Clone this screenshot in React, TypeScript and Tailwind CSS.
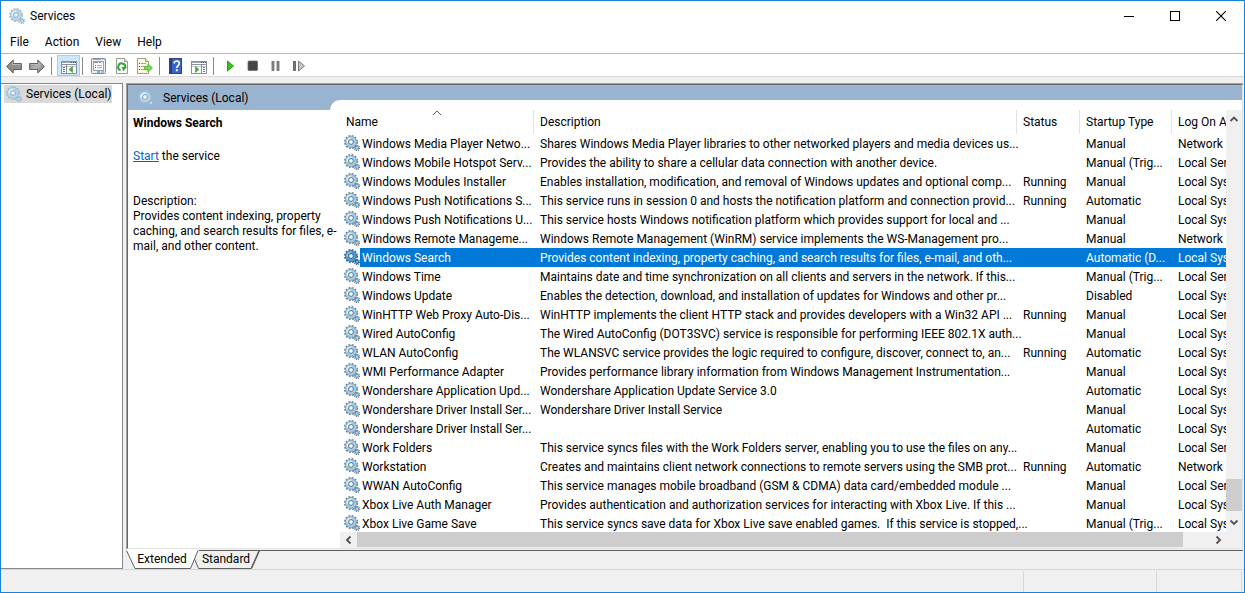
import type { ReactNode } from "react";

type GearTone = "normal" | "pale" | "selected";

const gearTones = {
  normal: { teeth: "#5f819b", body: "#a5cae2", rim: "#7299b4", hub: "#4d7089", shine: "#dceef8", hole: "#ffffff" },
  pale: { teeth: "#9bbace", body: "#b9d6e8", rim: "#95b9cf", hub: "#7fa5bf", shine: "#e3f1f9", hole: "#f4f8fb" },
  selected: { teeth: "#2f6795", body: "#4f9ad0", rim: "#2b6ea6", hub: "#1d4f7c", shine: "#8cc3ea", hole: "#ffffff" },
};

function GearIcon({ tone = "normal" }: { tone?: GearTone }) {
  const c = gearTones[tone];
  return (
    <svg width="16" height="16" viewBox="0 0 16 16" className="block shrink-0" aria-hidden="true">
      <circle cx="7" cy="7" r="6.1" fill="none" stroke={c.teeth} strokeWidth="1.8" strokeDasharray="1.8 1.39" />
      <circle cx="7" cy="7" r="4.2" fill="none" stroke={c.body} strokeWidth="3.2" />
      <circle cx="7" cy="7" r="5.5" fill="none" stroke={c.rim} strokeWidth="0.6" />
      <path d="M3.2 7.6A3.9 3.9 0 0 1 7.4 3.2" fill="none" stroke={c.shine} strokeWidth="1.6" />
      <circle cx="7" cy="7" r="2.4" fill={c.hole} stroke={c.hub} strokeWidth="1" />
      <circle cx="13" cy="12.9" r="2.6" fill="none" stroke={c.teeth} strokeWidth="1.2" strokeDasharray="1.1 0.94" />
      <circle cx="13" cy="12.9" r="1.6" fill={c.shine} stroke={c.rim} strokeWidth="1.1" />
      <circle cx="13" cy="12.9" r="0.5" fill={c.hub} />
    </svg>
  );
}

function ArrowIcon({ flip = false }: { flip?: boolean }) {
  return (
    <svg width="16" height="16" viewBox="0 0 16 16" aria-hidden="true">
      <defs>
        <linearGradient id={flip ? "arrowR" : "arrowL"} x1="0" y1="0" x2={flip ? "1" : "-1"} y2="1">
          <stop offset="0" stopColor="#777777" />
          <stop offset="0.5" stopColor="#b4b4b4" />
          <stop offset="1" stopColor="#6a6a6a" />
        </linearGradient>
      </defs>
      <path
        d={flip ? "M15.4 8.5L8.8 2V5.5H.6V11.5H8.8V15Z" : "M.6 8.5L7.2 2V5.5H15.4V11.5H7.2V15Z"}
        fill={flip ? "url(#arrowR)" : "#8f8f8f"}
        stroke="#606060"
        strokeLinejoin="round"
      />
      <path d={flip ? "M1.500 6.500H9.500V4.500" : "M14.500 6.500H6.500V4.500"} fill="none" stroke="#b9b9b9" />
    </svg>
  );
}

function TreePaneIcon({ right = false }: { right?: boolean }) {
  return (
    <svg width="16" height="16" viewBox="0 0 16 16" aria-hidden="true">
      <rect x="0.5" y="3.5" width="15" height="12" fill="#ffffff" stroke="#8a9099" />
      <rect x="1" y="4" width="14" height="1" fill="#a4abb5" />
      <path d="M10 4.500h1M12 4.500h1M14 4.500h1" stroke="#4d5560" />
      <rect x="1" y="6" width="14" height="1" fill="#8a9099" />
      <rect x="1" y="8" width="14" height="1" fill="#c3c8ce" />
      {right ? (
        <>
          <rect x="10" y="7" width="1" height="8" fill="#8a9099" />
          <path d="M12 9.500h2M12 11.500h2M12 13.500h2" stroke="#3f7fc4" />
          <path d="M4.500 8.500v6L8 11.500Z" fill="#43b02a" stroke="#2d8a1d" strokeWidth="0.5" />
        </>
      ) : (
        <>
          <rect x="5" y="7" width="1" height="8" fill="#8a9099" />
          <path d="M2 9.500h2M2 11.500h2M2 13.500h2" stroke="#3f7fc4" />
          <path d="M11.500 8.500v6L8 11.500Z" fill="#43b02a" stroke="#2d8a1d" strokeWidth="0.5" />
        </>
      )}
    </svg>
  );
}

function PropertiesIcon() {
  return (
    <svg width="16" height="16" viewBox="0 0 16 16" aria-hidden="true">
      <rect x="0.5" y="0.5" width="14" height="15" rx="0.8" fill="#eef0f2" stroke="#878d96" />
      <path d="M2 1.500h8M11 1.500h1M13 1.500h1" stroke="#a2a8b1" />
      <rect x="2.5" y="3.5" width="10" height="9" fill="#ffffff" stroke="#9aa1ab" />
      <path d="M3 4.500h4M8 4.500h2" stroke="#7f93ad" />
      <path d="M4 7.500h1M4 9.500h1" stroke="#2f6fd0" />
      <path d="M6 7.500h5M6 9.500h5" stroke="#9bb0ca" />
      <rect x="6" y="13" width="3" height="2" fill="#43c4e8" />
      <rect x="10" y="13" width="3" height="2" fill="#b7bcc4" />
    </svg>
  );
}

function RefreshIcon() {
  return (
    <svg width="16" height="16" viewBox="0 0 16 16" aria-hidden="true">
      <path d="M2.500 .5h8l3 3v12h-11Z" fill="#fafafa" stroke="#9a9a9a" />
      <path d="M10.500 .5v3h3" fill="#e4e4e4" stroke="#9a9a9a" />
      <path d="M6.500 12.300A3.600 3.600 0 1 1 11.400 9.200" fill="none" stroke="#35a832" strokeWidth="2" />
      <path d="M7.600 8.900H13L9.400 13.200Z" fill="#35a832" />
    </svg>
  );
}

function ExportIcon() {
  return (
    <svg width="16" height="16" viewBox="0 0 16 16" aria-hidden="true">
      <path d="M0.500 .5h8l3 3v12h-11Z" fill="#fdf8e2" stroke="#a39c80" />
      <path d="M8.500 .5v3h3" fill="#efe6c0" stroke="#a39c80" />
      <path d="M2 5.500h1M2 8.500h1M2 11.500h1" stroke="#444" />
      <path d="M4 5.500h5M4 8.500h3M4 11.500h4" stroke="#9aa0c0" />
      <path d="M7.500 8.500H11V6L15.500 10L11 14V11.500H7.500Z" fill="#7ed957" stroke="#45ab2c" strokeWidth="0.8" />
    </svg>
  );
}

function HelpIcon() {
  return (
    <svg width="14" height="16" viewBox="0 0 14 16" aria-hidden="true">
      <rect x="0.5" y="0.5" width="12" height="15" fill="#3c64c8" stroke="#27468f" />
      <rect x="1" y="1" width="2" height="14" fill="#24408c" />
      <path d="M5.200 5.600C5.200 3.700 6.300 3 7.600 3s2.700.9 2.700 2.500c0 2-2.500 2.200-2.500 4.500" fill="none" stroke="#fff" strokeWidth="1.700" />
      <rect x="6.900" y="11.300" width="1.900" height="1.900" fill="#fff" />
    </svg>
  );
}

function PlayIcon() {
  return (
    <svg width="16" height="16" viewBox="0 0 16 16" aria-hidden="true">
      <path d="M5.500 3V13L11.500 8Z" fill="#34c41c" stroke="#22a012" strokeLinejoin="round" />
    </svg>
  );
}

function StopIcon() {
  return (
    <svg width="16" height="16" viewBox="0 0 16 16" aria-hidden="true">
      <rect x="3" y="3" width="9.500" height="9.500" rx="1" fill="#454545" stroke="#6a6a6a" strokeWidth="0.8" />
    </svg>
  );
}

function PauseIcon() {
  return (
    <svg width="16" height="16" viewBox="0 0 16 16" aria-hidden="true">
      <rect x="4" y="3.500" width="2" height="9" fill="#8a8a8a" stroke="#666" strokeWidth="0.800" />
      <rect x="9" y="3.500" width="2" height="9" fill="#8a8a8a" stroke="#666" strokeWidth="0.800" />
    </svg>
  );
}

function RestartIcon() {
  return (
    <svg width="16" height="16" viewBox="0 0 16 16" aria-hidden="true">
      <rect x="2.500" y="3.500" width="2" height="9" fill="#777" stroke="#555" strokeWidth="0.800" />
      <path d="M7.500 3V13L13.500 8Z" fill="#c4c4c4" stroke="#7c7c7c" strokeLinejoin="round" />
    </svg>
  );
}

function Chevron({ dir }: { dir: "up" | "down" | "left" | "right" }) {
  const paths = {
    up: "M1.500 7L5 3.500L8.500 7",
    down: "M1.500 3.500L5 7L8.500 3.500",
    left: "M6.500 1.500L3 5L6.500 8.500",
    right: "M3.500 1.500L7 5L3.500 8.500",
  };
  return (
    <svg width="10" height="10" viewBox="0 0 10 10" aria-hidden="true">
      <path d={paths[dir]} fill="none" stroke="#555" strokeWidth="1.900" />
    </svg>
  );
}

function ToolButton({ label, active = false, children }: { label: string; active?: boolean; children: ReactNode }) {
  return (
    <button
      type="button"
      aria-label={label}
      aria-pressed={active || undefined}
      className={
        active
          ? "flex h-[21px] w-[23px] items-center justify-center border border-[#99d1ff] bg-[#cce8ff] pt-px"
          : "flex h-[21px] w-[23px] items-center justify-center pt-px pr-px"
      }
    >
      {children}
    </button>
  );
}

function ToolSeparator() {
  return (
    <div className="h-[21px] w-2 pt-[2px] pl-[2px]">
      <div className="h-[18px] w-px bg-[#8d8d8d]" />
    </div>
  );
}

type Service = [name: string, description: string, status: string, startup: string, logon: string];

const SYS = "Local Sys";
const SER = "Local Ser";
const NET = "Network";

const services: Service[] = [
  ["Windows Media Player Netwo...", "Shares Windows Media Player libraries to other networked players and media devices us...", "", "Manual", NET],
  ["Windows Mobile Hotspot Serv...", "Provides the ability to share a cellular data connection with another device.", "", "Manual (Trig...", SER],
  ["Windows Modules Installer", "Enables installation, modification, and removal of Windows updates and optional comp...", "Running", "Manual", SYS],
  ["Windows Push Notifications S...", "This service runs in session 0 and hosts the notification platform and connection provid...", "Running", "Automatic", SYS],
  ["Windows Push Notifications U...", "This service hosts Windows notification platform which provides support for local and ...", "", "Manual", SYS],
  ["Windows Remote Manageme...", "Windows Remote Management (WinRM) service implements the WS-Management pro...", "", "Manual", NET],
  ["Windows Search", "Provides content indexing, property caching, and search results for files, e-mail, and oth...", "", "Automatic (D...", SYS],
  ["Windows Time", "Maintains date and time synchronization on all clients and servers in the network. If this...", "", "Manual (Trig...", SER],
  ["Windows Update", "Enables the detection, download, and installation of updates for Windows and other pr...", "", "Disabled", SYS],
  ["WinHTTP Web Proxy Auto-Dis...", "WinHTTP implements the client HTTP stack and provides developers with a Win32 API ...", "Running", "Manual", SER],
  ["Wired AutoConfig", "The Wired AutoConfig (DOT3SVC) service is responsible for performing IEEE 802.1X auth...", "", "Manual", SYS],
  ["WLAN AutoConfig", "The WLANSVC service provides the logic required to configure, discover, connect to, an...", "Running", "Automatic", SYS],
  ["WMI Performance Adapter", "Provides performance library information from Windows Management Instrumentation...", "", "Manual", SYS],
  ["Wondershare Application Upd...", "Wondershare Application Update Service 3.0", "", "Automatic", SYS],
  ["Wondershare Driver Install Ser...", "Wondershare Driver Install Service", "", "Manual", SYS],
  ["Wondershare Driver Install Ser...", "", "", "Automatic", SYS],
  ["Work Folders", "This service syncs files with the Work Folders server, enabling you to use the files on any...", "", "Manual", SER],
  ["Workstation", "Creates and maintains client network connections to remote servers using the SMB prot...", "Running", "Automatic", NET],
  ["WWAN AutoConfig", "This service manages mobile broadband (GSM & CDMA) data card/embedded module ...", "", "Manual", SER],
  ["Xbox Live Auth Manager", "Provides authentication and authorization services for interacting with Xbox Live. If this ...", "", "Manual", SYS],
  ["Xbox Live Game Save", "This service syncs save data for Xbox Live save enabled games.\u00a0 If this service is stopped,...", "", "Manual (Trig...", SYS],
];

const SELECTED = "Windows Search";

function ServiceTable() {
  return (
    <table className="w-full table-fixed border-separate border-spacing-0 text-left whitespace-nowrap">
      <colgroup>
        <col className="w-[192px]" />
        <col />
        <col className="w-[63px]" />
        <col className="w-[92px]" />
        <col className="w-[54px]" />
      </colgroup>
      <thead>
        <tr className="h-6">
          <th className="relative border-r border-[#e2e2e2] p-0 pl-1 font-normal">
            Name
            <svg width="10" height="6" viewBox="0 0 10 6" className="absolute top-0 left-[90px]" aria-hidden="true">
              <path d="M1 5L5 1L9 5" fill="none" stroke="#5a5a5a" />
            </svg>
          </th>
          <th className="border-r border-[#e2e2e2] p-0 pl-[6px] font-normal">Description</th>
          <th className="border-r border-[#e2e2e2] p-0 pl-[6px] font-normal">Status</th>
          <th className="border-r border-[#e2e2e2] p-0 pl-[6px] font-normal">Startup Type</th>
          <th className="p-0 pl-[6px] font-normal">Log On A</th>
        </tr>
      </thead>
      <tbody className="leading-[17px]">
        {services.map(([name, description, status, startup, logon], i) => {
          const selected = name === SELECTED;
          return (
            <tr key={i} aria-selected={selected} className={selected ? "bg-[#0078d7] text-white" : ""}>
              <td className="p-0">
                <div className="flex h-[19px]">
                  <span className="w-[18px] shrink-0 bg-white pt-px pl-[2px]">
                    <GearIcon tone={selected ? "selected" : "normal"} />
                  </span>
                  <span className="pt-[2px] pl-[2px]">{name}</span>
                </div>
              </td>
              <td className="p-0 pt-[2px] pl-[6px]">{description}</td>
              <td className="p-0 pt-[2px] pl-[6px]">{status}</td>
              <td className="p-0 pt-[2px] pl-[6px]">{startup}</td>
              <td className="p-0 pt-[2px] pl-[6px]">{logon}</td>
            </tr>
          );
        })}
      </tbody>
    </table>
  );
}

export default function App() {
  return (
    <div className="flex min-h-screen flex-col border border-[#1883d7] bg-[#f0f0f0] font-['Roboto','Open_Sans',sans-serif] text-[12px] leading-[15px] text-black">
      <header className="flex h-[30px] items-center bg-white pl-2">
        <GearIcon tone="pale" />
        <h1 className="flex-1 pl-[5px]">Services</h1>
        <button type="button" aria-label="Minimize" className="flex h-full w-[46px] items-center justify-center">
          <svg width="10" height="10" viewBox="0 0 10 10"><path d="M0 5.500H10" stroke="#000" /></svg>
        </button>
        <button type="button" aria-label="Maximize" className="flex h-full w-[46px] items-center justify-center">
          <svg width="10" height="10" viewBox="0 0 10 10"><rect x="0.500" y="0.500" width="9" height="9" fill="none" stroke="#000" /></svg>
        </button>
        <button type="button" aria-label="Close" className="flex h-full w-[46px] items-center justify-center">
          <svg width="10" height="10" viewBox="0 0 10 10"><path d="M0 0L10 10M10 0L0 10" stroke="#000" strokeWidth="1.100" /></svg>
        </button>
      </header>

      <nav className="flex h-[23px] items-center gap-4 border-b border-[#b5b8c4] bg-white pl-[9px]">
        <button type="button">File</button>
        <button type="button">Action</button>
        <button type="button">View</button>
        <button type="button">Help</button>
      </nav>

      <div role="toolbar" aria-label="Standard" className="flex h-[23px] items-end border-b border-[#d9d9d9] bg-white pl-[2px]">
        <ToolButton label="Back"><ArrowIcon /></ToolButton>
        <ToolButton label="Forward"><ArrowIcon flip /></ToolButton>
        <ToolSeparator />
        <ToolButton label="Show/Hide Console Tree" active><TreePaneIcon /></ToolButton>
        <ToolSeparator />
        <ToolButton label="Properties"><PropertiesIcon /></ToolButton>
        <ToolButton label="Refresh"><RefreshIcon /></ToolButton>
        <ToolButton label="Export List"><ExportIcon /></ToolButton>
        <ToolSeparator />
        <ToolButton label="Help Topics"><HelpIcon /></ToolButton>
        <ToolButton label="Show/Hide Action Pane"><TreePaneIcon right /></ToolButton>
        <ToolSeparator />
        <ToolButton label="Start Service"><PlayIcon /></ToolButton>
        <ToolButton label="Stop Service"><StopIcon /></ToolButton>
        <ToolButton label="Pause Service"><PauseIcon /></ToolButton>
        <ToolButton label="Restart Service"><RestartIcon /></ToolButton>
      </div>

      <main className="flex flex-1 gap-[3px] pt-[6px]">
        <aside className="w-[122px] shrink-0 border border-l-0 border-[#828790] bg-white pt-px pl-[3px]">
          <button type="button" className="flex h-[18px] w-[108px] items-center gap-1 bg-[#d9d9d9] pl-[2px] whitespace-nowrap">
            <GearIcon tone="pale" />
            Services (Local)
          </button>
        </aside>

        <section className="flex min-w-0 flex-1 flex-col pr-px">
          <div className="flex flex-1 border-t border-l border-[#a0a0a0]">
            <div className="flex min-w-0 flex-1 border border-t-[#696969] border-r-[#e3e3e3] border-b-[#e3e3e3] border-l-[#696969] bg-[#99b4d1]">
              <div className="flex w-[202px] shrink-0 flex-col">
                <div className="flex h-[25px] items-center gap-[9px] pt-px pl-[10px]">
                  <GearIcon tone="pale" />
                  <h2>Services (Local)</h2>
                </div>
                <div className="flex-1 bg-white pt-[6px] pl-[5px]">
                  <h3 className="font-bold">Windows Search</h3>
                  <p className="mt-[18px]">
                    <a href="#start" className="text-[#0066cc] underline">Start</a> the service
                  </p>
                  <p className="mt-[30px]">Description:</p>
                  <p className="relative -mr-2">
                    Provides content indexing, property caching, and search results for files, e-mail, and other content.
                  </p>
                </div>
              </div>

              <div className="flex min-w-0 flex-1 flex-col pt-[15px]">
                <div className="flex min-h-0 flex-1 flex-col rounded-tl-[10px] bg-white pt-[10px] pl-[10px]">
                  <div className="-mb-px flex flex-1">
                    <div className="min-w-0 flex-1 pl-[2px]">
                      <ServiceTable />
                    </div>
                    <div className="flex w-4 flex-col bg-[#f0f0f0] pb-px">
                      <button type="button" aria-label="Scroll up" className="flex h-[17px] items-center justify-center"><Chevron dir="up" /></button>
                      <div className="flex flex-1 flex-col justify-end">
                        <div className="h-8 bg-[#cdcdcd]" />
                      </div>
                      <button type="button" aria-label="Scroll down" className="flex h-[21px] items-center justify-center"><Chevron dir="down" /></button>
                    </div>
                  </div>
                  <div className="flex h-4 bg-[#f0f0f0] pr-4 pb-px">
                    <button type="button" aria-label="Scroll left" className="flex w-[17px] items-center justify-center"><Chevron dir="left" /></button>
                    <div className="flex-1 pr-[26px]">
                      <div className="h-full bg-[#cdcdcd]" />
                    </div>
                    <button type="button" aria-label="Scroll right" className="flex w-[17px] items-center justify-center"><Chevron dir="right" /></button>
                  </div>
                </div>
              </div>
            </div>
          </div>

          <div className="flex h-5">
            <div role="tablist" className="flex">
              <button type="button" role="tab" aria-selected="true" className="relative h-5 w-[68px] pt-px pl-1 text-center">
                <svg width="74" height="20" viewBox="0 0 74 20" className="absolute top-0 left-0" aria-hidden="true">
                  <path d="M0 0H73V1.500L64.500 19.500H9L0.500 1.500Z" fill="#fff" />
                  <path d="M0.500 1.500L9 19.500H64.500L68.500 10" fill="none" stroke="#5f5f5f" />
                </svg>
                <span className="relative">Extended</span>
              </button>
              <button type="button" role="tab" aria-selected="false" className="relative h-5 w-[66px] pt-px pr-[2px] text-center">
                <svg width="68" height="20" viewBox="0 0 68 20" className="absolute top-0 left-0" aria-hidden="true">
                  <path d="M4 1.500L0.500 10L4.500 19.500H57.500L65.500 1.500" fill="none" stroke="#5f5f5f" />
                  <path d="M57.500 19L65 2" stroke="#5f5f5f" strokeWidth="1.500" />
                </svg>
                <span className="relative">Standard</span>
              </button>
            </div>
            <div className="-ml-[62px] flex-1 pt-px">
              <div className="h-px bg-[#5f5f5f]" />
            </div>
          </div>
        </section>
      </main>

      <footer className="flex h-[23px] border-t border-[#d7d7d7] pt-px pr-[2px]">
        <div className="flex-1 border-r border-[#d7d7d7]" />
        <div className="w-[133px] border-r border-[#d7d7d7]" />
        <div className="w-[85px] border-r border-[#d7d7d7]" />
      </footer>
    </div>
  );
}
